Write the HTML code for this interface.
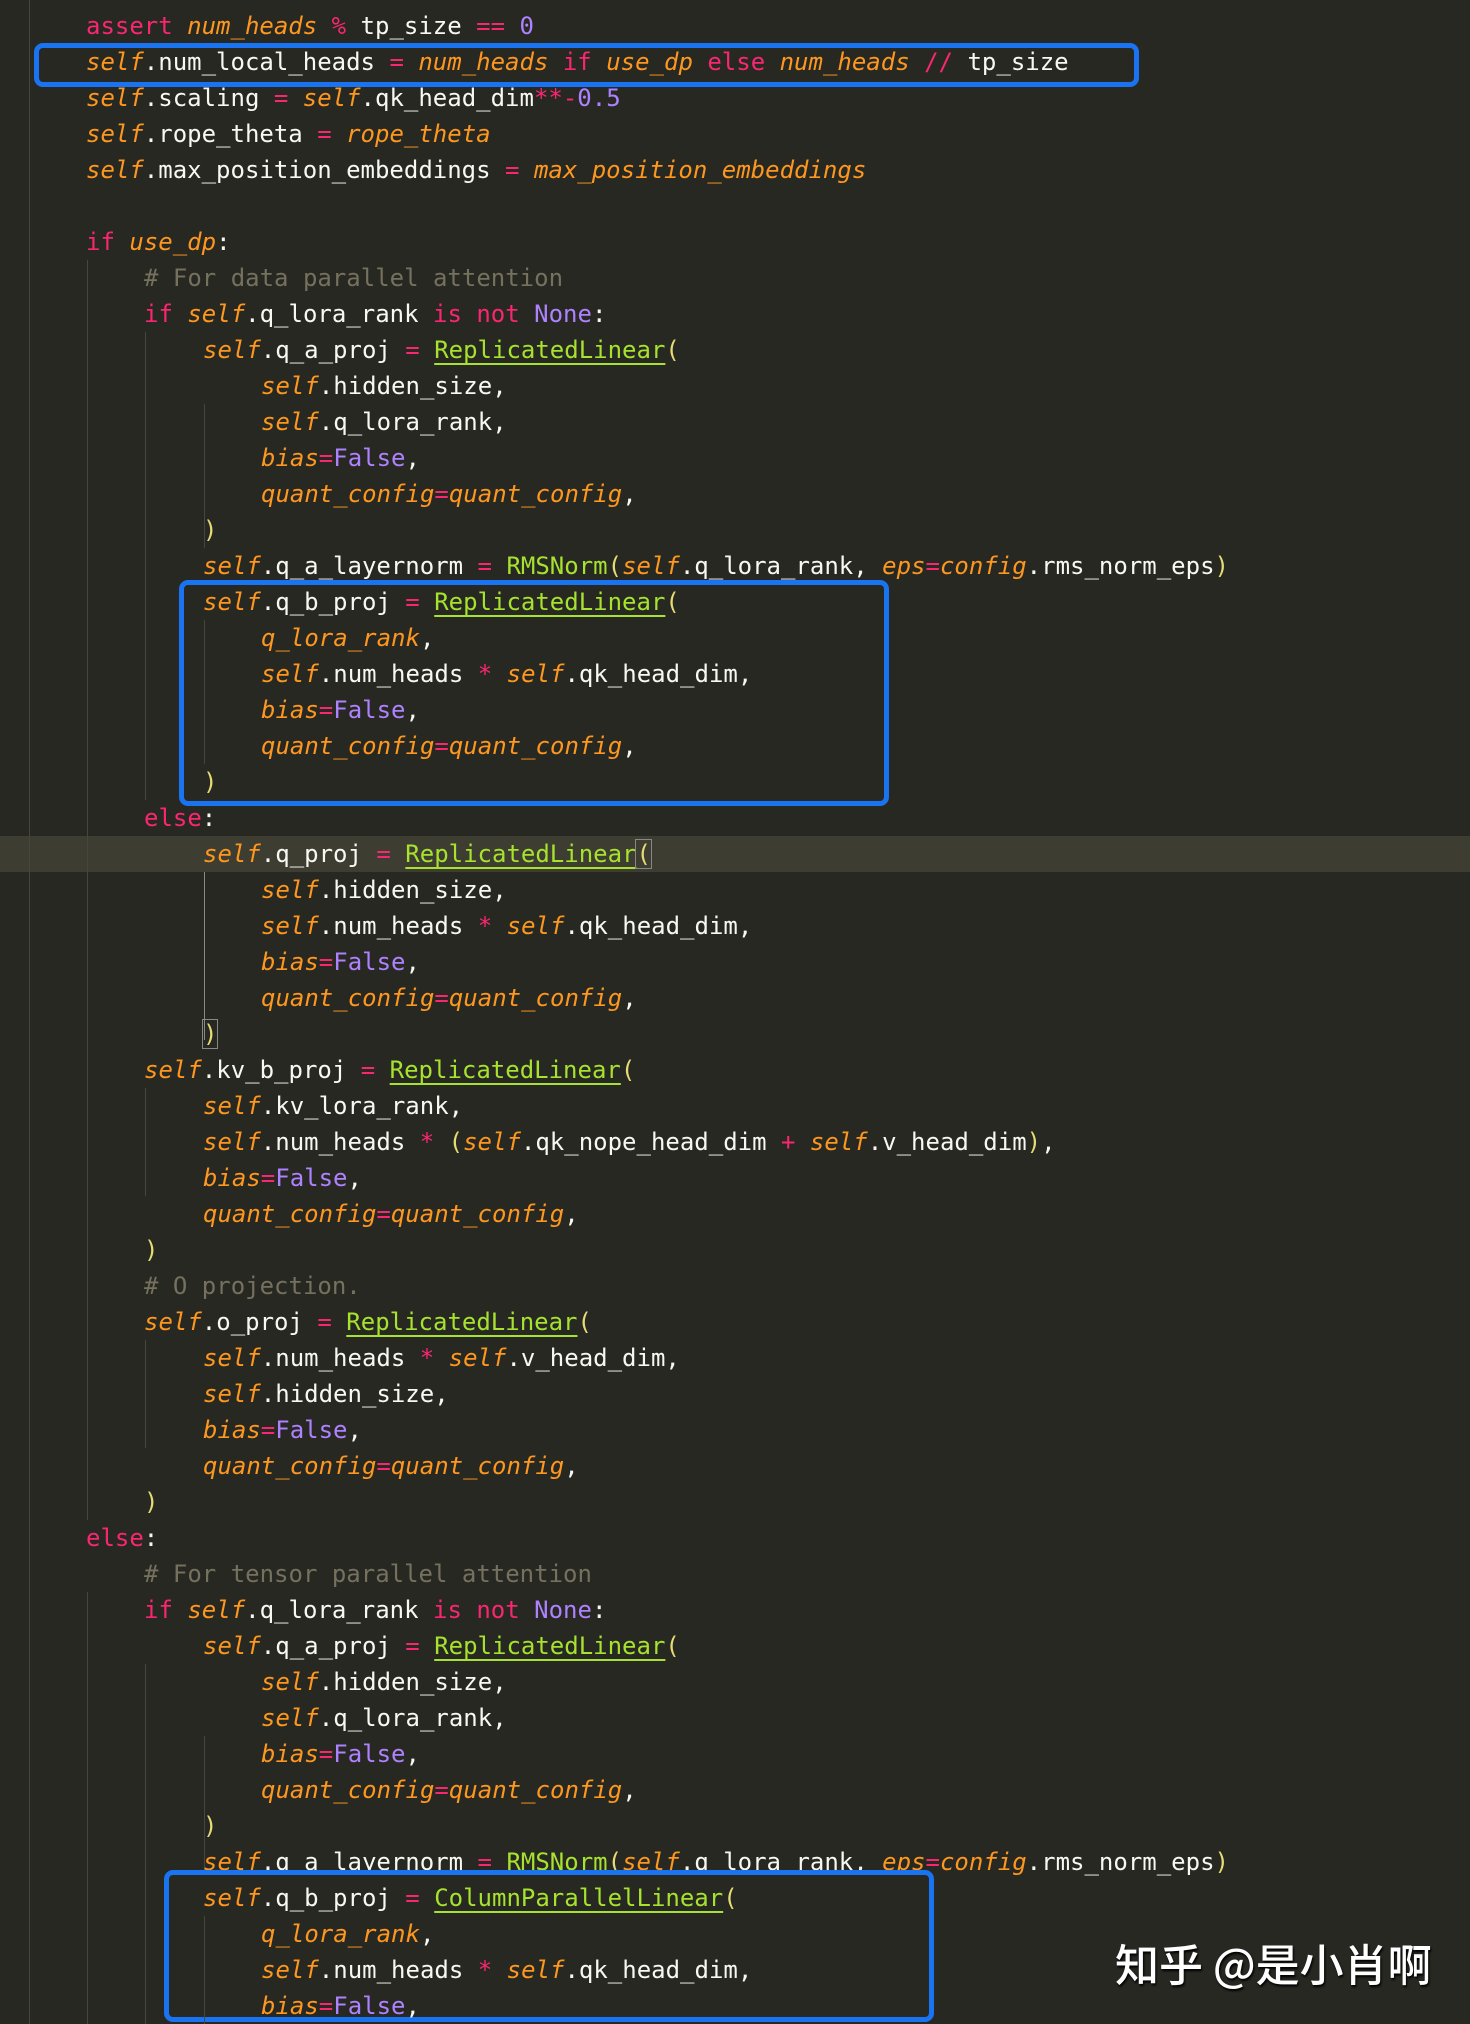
<!DOCTYPE html>
<html><head><meta charset="utf-8"><style>
html,body{margin:0;padding:0;background:#272822;width:1470px;height:2024px;overflow:hidden;position:relative}
.l{position:absolute;white-space:pre;font-family:"DejaVu Sans Mono","Liberation Mono",monospace;font-size:24px;line-height:36px;height:36px;color:#f8f8f2}
.s{color:#fd971f;font-style:italic}
.k{color:#f92672}
.p{color:#ae81ff}
.g{color:#a6e22e;text-decoration:underline;text-decoration-color:#a6e22e;text-underline-offset:5px}
.c{color:#75715e}
.o{color:#fd971f;font-style:italic}
.y{color:#e6db74}
.gd{position:absolute;width:1px;background:#45463f}
.box{position:absolute;border:5px solid #1a73f0;border-radius:9px;box-sizing:border-box}
.wm{position:absolute;left:1115px;top:1930px;font-family:"Noto Sans CJK SC","WenQuanYi Zen Hei",sans-serif;font-size:44px;font-weight:500;color:#fff;text-shadow:1px 2px 2px #000;white-space:nowrap}
</style></head><body>
<div style="position:absolute;left:0;top:836px;width:1470px;height:36px;background:#3e3d32"></div>
<div class="gd" style="left:29px;top:0;height:2024px"></div>
<div class="gd" style="left:87px;top:260px;height:1260px"></div>
<div class="gd" style="left:87px;top:1592px;height:432px"></div>
<div class="gd" style="left:145px;top:332px;height:468px"></div>
<div class="gd" style="left:145px;top:1088px;height:108px"></div>
<div class="gd" style="left:145px;top:1340px;height:108px"></div>
<div class="gd" style="left:145px;top:1664px;height:360px"></div>
<div class="gd" style="left:204px;top:404px;height:144px"></div>
<div class="gd" style="left:204px;top:620px;height:144px"></div>
<div class="gd" style="left:204px;top:872px;height:168px;background:#8a8a80"></div>
<div class="gd" style="left:204px;top:1736px;height:144px"></div>
<div class="gd" style="left:204px;top:1952px;height:72px"></div>
<div class="l" style="left:86px;top:8px"><span class="k">assert</span> <span class="o">num_heads</span> <span class="k">%</span> tp_size <span class="k">==</span> <span class="p">0</span></div>
<div class="l" style="left:86px;top:44px"><span class="s">self</span>.num_local_heads <span class="k">=</span> <span class="o">num_heads</span> <span class="k">if</span> <span class="o">use_dp</span> <span class="k">else</span> <span class="o">num_heads</span> <span class="k">//</span> tp_size</div>
<div class="l" style="left:86px;top:80px"><span class="s">self</span>.scaling <span class="k">=</span> <span class="s">self</span>.qk_head_dim<span class="k">**-</span><span class="p">0.5</span></div>
<div class="l" style="left:86px;top:116px"><span class="s">self</span>.rope_theta <span class="k">=</span> <span class="o">rope_theta</span></div>
<div class="l" style="left:86px;top:152px"><span class="s">self</span>.max_position_embeddings <span class="k">=</span> <span class="o">max_position_embeddings</span></div>
<div class="l" style="left:86px;top:224px"><span class="k">if</span> <span class="o">use_dp</span>:</div>
<div class="l c" style="left:144px;top:260px"># For data parallel attention</div>
<div class="l" style="left:144px;top:296px"><span class="k">if</span> <span class="s">self</span>.q_lora_rank <span class="k">is not</span> <span class="p">None</span>:</div>
<div class="l" style="left:203px;top:332px"><span class="s">self</span>.q_a_proj <span class="k">=</span> <span class="g">ReplicatedLinear</span><span class="y">(</span></div>
<div class="l" style="left:261px;top:368px"><span class="s">self</span>.hidden_size,</div>
<div class="l" style="left:261px;top:404px"><span class="s">self</span>.q_lora_rank,</div>
<div class="l" style="left:261px;top:440px"><span class="o">bias</span><span class="k">=</span><span class="p">False</span>,</div>
<div class="l" style="left:261px;top:476px"><span class="o">quant_config</span><span class="k">=</span><span class="o">quant_config</span>,</div>
<div class="l y" style="left:203px;top:512px">)</div>
<div class="l" style="left:203px;top:548px"><span class="s">self</span>.q_a_layernorm <span class="k">=</span> <span class="g" style="text-decoration:none">RMSNorm</span><span class="y">(</span><span class="s">self</span>.q_lora_rank, <span class="o">eps</span><span class="k">=</span><span class="o">config</span>.rms_norm_eps<span class="y">)</span></div>
<div class="l" style="left:203px;top:584px"><span class="s">self</span>.q_b_proj <span class="k">=</span> <span class="g">ReplicatedLinear</span><span class="y">(</span></div>
<div class="l" style="left:261px;top:620px"><span class="o">q_lora_rank</span>,</div>
<div class="l" style="left:261px;top:656px"><span class="s">self</span>.num_heads <span class="k">*</span> <span class="s">self</span>.qk_head_dim,</div>
<div class="l" style="left:261px;top:692px"><span class="o">bias</span><span class="k">=</span><span class="p">False</span>,</div>
<div class="l" style="left:261px;top:728px"><span class="o">quant_config</span><span class="k">=</span><span class="o">quant_config</span>,</div>
<div class="l y" style="left:203px;top:764px">)</div>
<div class="l" style="left:144px;top:800px"><span class="k">else</span>:</div>
<div class="l" style="left:203px;top:836px"><span class="s">self</span>.q_proj <span class="k">=</span> <span class="g">ReplicatedLinear</span><span class="y" style="outline:1px solid #888">(</span></div>
<div class="l" style="left:261px;top:872px"><span class="s">self</span>.hidden_size,</div>
<div class="l" style="left:261px;top:908px"><span class="s">self</span>.num_heads <span class="k">*</span> <span class="s">self</span>.qk_head_dim,</div>
<div class="l" style="left:261px;top:944px"><span class="o">bias</span><span class="k">=</span><span class="p">False</span>,</div>
<div class="l" style="left:261px;top:980px"><span class="o">quant_config</span><span class="k">=</span><span class="o">quant_config</span>,</div>
<div class="l y" style="left:203px;top:1016px"><span style="outline:1px solid #888">)</span></div>
<div class="l" style="left:144px;top:1052px"><span class="s">self</span>.kv_b_proj <span class="k">=</span> <span class="g">ReplicatedLinear</span><span class="y">(</span></div>
<div class="l" style="left:203px;top:1088px"><span class="s">self</span>.kv_lora_rank,</div>
<div class="l" style="left:203px;top:1124px"><span class="s">self</span>.num_heads <span class="k">*</span> <span class="y">(</span><span class="s">self</span>.qk_nope_head_dim <span class="k">+</span> <span class="s">self</span>.v_head_dim<span class="y">)</span>,</div>
<div class="l" style="left:203px;top:1160px"><span class="o">bias</span><span class="k">=</span><span class="p">False</span>,</div>
<div class="l" style="left:203px;top:1196px"><span class="o">quant_config</span><span class="k">=</span><span class="o">quant_config</span>,</div>
<div class="l y" style="left:144px;top:1232px">)</div>
<div class="l c" style="left:144px;top:1268px"># O projection.</div>
<div class="l" style="left:144px;top:1304px"><span class="s">self</span>.o_proj <span class="k">=</span> <span class="g">ReplicatedLinear</span><span class="y">(</span></div>
<div class="l" style="left:203px;top:1340px"><span class="s">self</span>.num_heads <span class="k">*</span> <span class="s">self</span>.v_head_dim,</div>
<div class="l" style="left:203px;top:1376px"><span class="s">self</span>.hidden_size,</div>
<div class="l" style="left:203px;top:1412px"><span class="o">bias</span><span class="k">=</span><span class="p">False</span>,</div>
<div class="l" style="left:203px;top:1448px"><span class="o">quant_config</span><span class="k">=</span><span class="o">quant_config</span>,</div>
<div class="l y" style="left:144px;top:1484px">)</div>
<div class="l" style="left:86px;top:1520px"><span class="k">else</span>:</div>
<div class="l c" style="left:144px;top:1556px"># For tensor parallel attention</div>
<div class="l" style="left:144px;top:1592px"><span class="k">if</span> <span class="s">self</span>.q_lora_rank <span class="k">is not</span> <span class="p">None</span>:</div>
<div class="l" style="left:203px;top:1628px"><span class="s">self</span>.q_a_proj <span class="k">=</span> <span class="g">ReplicatedLinear</span><span class="y">(</span></div>
<div class="l" style="left:261px;top:1664px"><span class="s">self</span>.hidden_size,</div>
<div class="l" style="left:261px;top:1700px"><span class="s">self</span>.q_lora_rank,</div>
<div class="l" style="left:261px;top:1736px"><span class="o">bias</span><span class="k">=</span><span class="p">False</span>,</div>
<div class="l" style="left:261px;top:1772px"><span class="o">quant_config</span><span class="k">=</span><span class="o">quant_config</span>,</div>
<div class="l y" style="left:203px;top:1808px">)</div>
<div class="l" style="left:203px;top:1844px"><span class="s">self</span>.q_a_layernorm <span class="k">=</span> <span class="g" style="text-decoration:none">RMSNorm</span><span class="y">(</span><span class="s">self</span>.q_lora_rank, <span class="o">eps</span><span class="k">=</span><span class="o">config</span>.rms_norm_eps<span class="y">)</span></div>
<div class="box" style="left:164px;top:1870px;width:770px;height:152px;background:#272822"></div>
<div class="gd" style="left:204px;top:1916px;height:108px"></div>
<div class="l" style="left:203px;top:1880px"><span class="s">self</span>.q_b_proj <span class="k">=</span> <span class="g">ColumnParallelLinear</span><span class="y">(</span></div>
<div class="l" style="left:261px;top:1916px"><span class="o">q_lora_rank</span>,</div>
<div class="l" style="left:261px;top:1952px"><span class="s">self</span>.num_heads <span class="k">*</span> <span class="s">self</span>.qk_head_dim,</div>
<div class="l" style="left:261px;top:1988px"><span class="o">bias</span><span class="k">=</span><span class="p">False</span>,</div>
<div class="box" style="left:34px;top:43px;width:1105px;height:44px"></div>
<div class="box" style="left:179px;top:580px;width:710px;height:226px"></div>
<div class="wm">知乎 @是小肖啊</div>
</body></html>
